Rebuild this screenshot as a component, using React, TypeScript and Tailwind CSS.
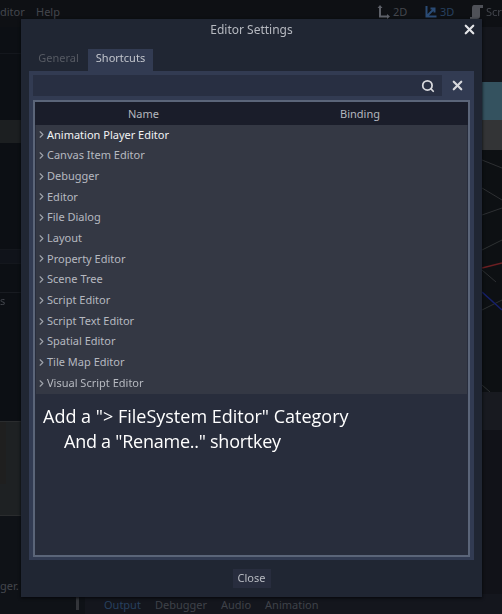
import React from 'react';
import { ChevronRight, Search, X } from 'lucide-react';

const categories = [
  'Animation Player Editor',
  'Canvas Item Editor',
  'Debugger',
  'Editor',
  'File Dialog',
  'Layout',
  'Property Editor',
  'Scene Tree',
  'Script Editor',
  'Script Text Editor',
  'Spatial Editor',
  'Tile Map Editor',
  'Visual Script Editor',
];

const Icon2D = () => (
  <svg width="13" height="14" viewBox="0 0 13 14" fill="none" stroke="#5d6068" strokeWidth="2">
    <path d="M3 2v9.500h8" />
    <path d="M3 0 .5 3h5zM13 11.500l-3-2.500v5z" fill="#5d6068" stroke="none" />
  </svg>
);

const Icon3D = () => (
  <svg width="13" height="14" viewBox="0 0 13 14" fill="none" stroke="#2a4b75" strokeWidth="2">
    <path d="M2.500 1v10.500h10M2.500 11.500l7-7M6.500 3.500h4V7.500" />
  </svg>
);

const IconScript = () => (
  <svg width="13" height="14" viewBox="0 0 13 14" fill="#4f5158">
    <path d="M4 0h9v3h-3v8c0 2-1 3-3 3H0v-2h2V3c0-2 1-3 2-3z" />
  </svg>
);

const TopBar = () => (
  <div className="flex h-[27px] shrink-0 items-start bg-[#0e1014] pt-[4px] text-[11px] leading-[15px] text-[#43464d]">
    <span className="w-[36px]">ditor</span>
    <span>Help</span>
    <div className="ml-auto flex items-center">
      <Icon2D />
      <span className="ml-[3px] w-[31px]">2D</span>
      <Icon3D />
      <span className="ml-[3px] w-[30px] text-[#27405f]">3D</span>
      <IconScript />
      <span className="ml-[3px] w-[16px]">Scr</span>
    </div>
  </div>
);

const LeftDock = () => (
  <div className="flex w-[85px] shrink-0 flex-col bg-[#0c0f14] text-[11px] text-[#43464d]">
    <div className="h-[26px]" />
    <div className="h-[67px] border-t border-[#14171d]" />
    <div className="h-[23px] bg-[#1c1f21]" />
    <div className="h-[107px] border-b border-[#14171d]" />
    <div className="h-[14px] border-b border-[#14171d] bg-[#10131a]" />
    <div className="h-[29px] border-b border-[#181b21]" />
    <div className="h-[128px] leading-[15px]">s</div>
    <div className="flex h-[95px] border-y border-[#2a2c2e] bg-[#1e2123]">
      <div className="h-[62px] w-[6px] bg-[#1f1f1f]" />
    </div>
    <div className="relative flex-1 bg-[#0f1217] pt-[62px] leading-[15px]">
      ger.
      <div className="absolute right-[6px] top-[80px] h-[14px] w-[3px] bg-[#33353a]" />
    </div>
  </div>
);

const Viewport = () => (
  <div className="flex min-h-0 flex-1 flex-col items-end bg-[#111218]">
    <div className="h-[55px] w-[20px] bg-[#14161c]" />
    <div className="h-[38px] w-[20px] bg-[#34525f]" />
    <svg className="h-[272px] w-[20px]" viewBox="0 0 20 272" fill="none">
      <rect width="20" height="272" fill="#0d1013" />
      <rect width="20" height="30" fill="#333436" />
      <path d="M0 40 20 48M0 68 20 80M0 95 20 88M0 130 20 120M0 150 14 162M0 190 20 180M0 265 8 272" stroke="#2e3033" />
      <path d="M0 148 20 143" stroke="#6b1f22" strokeWidth="1.500" />
      <path d="M0 172 20 190" stroke="#16206b" strokeWidth="1.500" />
    </svg>
    <div className="h-[38px] w-[20px] bg-[#181a20]" />
    <div className="w-[20px] flex-1 bg-[#111218]" />
  </div>
);

const BottomTabs = () => (
  <div className="flex h-[20px] shrink-0 items-center gap-[14px] bg-[#14161d] pl-[19px] pt-[3px] text-[11px] text-[#3f4249]">
    <span className="text-[#27405f]">Output</span>
    <span>Debugger</span>
    <span>Audio</span>
    <span>Animation</span>
  </div>
);

const Row = ({ label, active }: { label: string; active: boolean }) => (
  <div className="flex h-[20.7px] items-center pb-[1px]">
    <ChevronRight size={11} strokeWidth={2.5} className="shrink-0 text-[#9fa3ab]" />
    <span className={active ? 'text-[#f2f3f5]' : 'text-[#b6b9c0]'}>{label}</span>
  </div>
);

const ShortcutTree = () => (
  <div className="flex min-h-0 flex-1 flex-col border-2 border-[#5b6579] bg-[#282d3c]">
    <div className="flex h-[23px] shrink-0 items-center bg-[#1a1d2a] pt-[1px] text-[#b4b7bf]">
      <span className="w-[217px] text-center">Name</span>
      <span className="w-[214px] pl-[2px] text-center">Binding</span>
    </div>
    <div className="mx-[1px] bg-[#343844]">
      {categories.map((c, i) => (
        <Row key={c} label={c} active={i === 0} />
      ))}
    </div>
  </div>
);

const Dialog = () => (
  <div className="absolute left-[21px] top-[19px] flex h-[578px] w-[461px] flex-col bg-[#202633] text-[11px] shadow-[0_1px_3px_#05060a]">
    <div className="relative flex h-[30px] shrink-0 items-center justify-center pb-[8px] text-[12px] text-[#b6b9c0]">
      Editor Settings
      <X size={15} strokeWidth={3.5} className="absolute right-[5px] top-[3px] text-[#e4e5e8]" />
    </div>
    <div className="flex h-[22px] shrink-0 pb-[3px] pl-[8px]">
      <div className="flex w-[59px] items-center justify-center text-[#565a63]">General</div>
      <div className="-mb-[3px] flex w-[65px] items-center justify-center bg-[#323b52] pb-[3px] text-[#c2c5cc]">Shortcuts</div>
    </div>
    <div className="mx-[8px] flex min-h-0 flex-1 flex-col bg-[#323b52] px-[4px] pb-[3px] pt-[4px]">
      <div className="flex h-[25px] shrink-0 pb-[4px]">
        <div className="flex flex-1 items-center justify-end bg-[#282f42] pr-[7px]">
          <Search size={14} strokeWidth={3} className="text-[#d8d9dd]" />
        </div>
        <div className="flex w-[28px] items-center justify-center pl-[2px]">
          <X size={15} strokeWidth={3.5} className="text-[#d8d9dd]" />
        </div>
      </div>
      <ShortcutTree />
    </div>
    <div className="flex h-[37px] shrink-0 items-center justify-center">
      <div className="flex h-[19px] w-[38px] items-center justify-center bg-[#282d3e] text-[#b8bbc2]">Close</div>
    </div>
  </div>
);

const App = () => (
  <div className="relative h-[614px] w-[502px] overflow-hidden bg-[#0e1014] font-['Noto_Sans',sans-serif]">
    <div className="relative h-full w-full blur-[0.6px]">
      <div className="flex h-full flex-col">
        <TopBar />
        <div className="flex min-h-0 flex-1">
          <LeftDock />
          <div className="flex min-w-0 flex-1 flex-col">
            <Viewport />
            <BottomTabs />
          </div>
        </div>
      </div>
      <Dialog />
    </div>
    <div className="absolute left-[43px] top-[404px] font-['Open_Sans',sans-serif] text-[18px] leading-[25px] text-white">
      <div>Add a "&gt; FileSystem Editor" Category</div>
      <div className="pl-[21px] tracking-[-0.25px]">And a "Rename.." shortkey</div>
    </div>
  </div>
);

export default App;
